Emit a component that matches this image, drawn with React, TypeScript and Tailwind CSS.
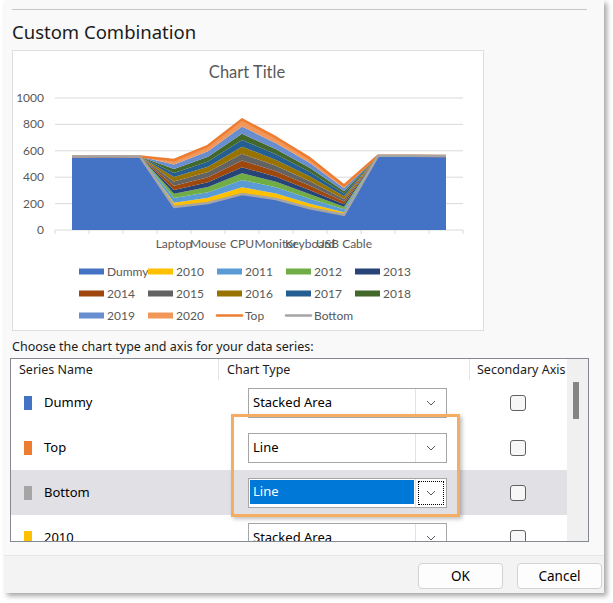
import React from "react";

// ── chart data ───────────────────────────────────────────────
const cx = (i: number) => 55 + 34 * (i + 0.5);
const yv = (v: number) => 230 - v * 0.132;

const dummy = [556, 558, 556, 175, 205, 272, 235, 165, 115, 562, 563, 560];
const thick = [0, 0, 0, 32, 39, 51, 42, 34, 20, 0, 0, 0];
const factors = [1.0, 1.1, 1.0, 0.9, 1.0, 1.0, 1.05, 1.0, 0.9, 1.1, 1.05];
const layerColors = [
  "#FFC000",
  "#5B9BD5",
  "#70AD47",
  "#264478",
  "#9E480E",
  "#636363",
  "#997300",
  "#255E91",
  "#43682B",
  "#698ED0",
  "#F1975A",
];

const stacks: number[][] = [dummy];
layerColors.forEach((_, k) => {
  const prev = stacks[stacks.length - 1];
  stacks.push(prev.map((p, i) => p + thick[i] * factors[k]));
});

const pts = (vals: number[]) => vals.map((v, i) => `${cx(i)},${yv(v)}`);

const areaPath = (upper: number[], lower: number[] | null) => {
  const up = pts(upper);
  const low = lower
    ? pts(lower).reverse()
    : [`${cx(11)},${yv(0)}`, `${cx(0)},${yv(0)}`];
  return `M${up.join(" L")} L${low.join(" L")} Z`;
};

const legend = [
  ["Dummy", "#4472C4", "box"],
  ["2010", "#FFC000", "box"],
  ["2011", "#5B9BD5", "box"],
  ["2012", "#70AD47", "box"],
  ["2013", "#264478", "box"],
  ["2014", "#9E480E", "box"],
  ["2015", "#636363", "box"],
  ["2016", "#997300", "box"],
  ["2017", "#255E91", "box"],
  ["2018", "#43682B", "box"],
  ["2019", "#698ED0", "box"],
  ["2020", "#F1975A", "box"],
  ["Top", "#ED7D31", "line"],
  ["Bottom", "#A5A5A5", "line"],
];

const xLabels: [string, number][] = [
  ["Laptop", 3],
  ["Mouse", 4],
  ["CPU", 5],
  ["Monitor", 6],
  ["Keyboard", 7],
  ["USB Cable", 8],
];

function Chart() {
  return (
    <svg width="470" height="279" viewBox="13 51 470 279">
      <g fontFamily="Lato, 'Liberation Sans', sans-serif" fill="#595959">
        <text x="247" y="77.5" fontSize="16.5" textAnchor="middle">
          Chart Title
        </text>
        {[0, 200, 400, 600, 800, 1000].map((v) => (
          <g key={v}>
            <line x1="55" x2="463" y1={yv(v)} y2={yv(v)} stroke="#d9d9d9" strokeWidth="1" />
            <text x="44" y={yv(v) + 4} fontSize="12" textAnchor="end">
              {v}
            </text>
          </g>
        ))}
        {Array.from({ length: 13 }).map((_, k) => (
          <line key={k} x1={55 + 34 * k} x2={55 + 34 * k} y1="230" y2="234" stroke="#d9d9d9" />
        ))}
        {xLabels.map(([t, i]) => (
          <text key={t} x={cx(i)} y="248" fontSize="12" textAnchor="middle">
            {t}
          </text>
        ))}
      </g>

      {/* stacked areas */}
      <path d={areaPath(dummy, null)} fill="#4472C4" />
      {layerColors.map((c, k) => (
        <path key={c} d={areaPath(stacks[k + 1], stacks[k])} fill={c} />
      ))}
      <polyline
        points={pts(stacks[stacks.length - 1]).join(" ")}
        fill="none"
        stroke="#ED7D31"
        strokeWidth="2.5"
        strokeLinejoin="round"
      />
      <polyline
        points={pts(dummy).join(" ")}
        fill="none"
        stroke="#A5A5A5"
        strokeWidth="2.5"
        strokeLinejoin="round"
      />

      {/* legend */}
      <g fontFamily="Lato, 'Liberation Sans', sans-serif" fill="#595959" fontSize="12">
        {legend.map(([name, color, kind], n) => {
          const x = 79 + 69 * (n % 5);
          const y = 271.5 + 22 * Math.floor(n / 5);
          return (
            <g key={name}>
              {kind === "box" ? (
                <rect x={x} y={y - 3} width="25" height="6" fill={color} />
              ) : (
                <line x1={x} x2={x + 25} y1={y} y2={y} stroke={color} strokeWidth="2.5" strokeLinecap="round" />
              )}
              <text x={x + 28} y={y + 4.5}>
                {name}
              </text>
            </g>
          );
        })}
      </g>
    </svg>
  );
}

function Chevron() {
  return (
    <svg width="10" height="6" viewBox="0 0 10 6">
      <path d="M1 1 L5 5 L9 1" fill="none" stroke="#5a5a5a" strokeWidth="1" />
    </svg>
  );
}

function Dropdown({ value, selected }: { value: string; selected?: boolean }) {
  return (
    <div className="flex w-[199px] h-[30px] border border-[#a6a6a6] bg-white">
      {selected ? (
        <div className="flex-1 p-px pb-[3px]">
          <div className="h-full bg-[#0078d7] text-white flex items-center pl-[3px] text-[13px]">
            {value}
          </div>
        </div>
      ) : (
        <div className="flex-1 flex items-center pl-[4px] text-[13px] text-black">{value}</div>
      )}
      <div className="w-[31px] border-l border-[#e3e3e3] flex items-center justify-center p-[2px]">
        <div
          className={`w-full h-full flex items-center justify-center ${
            selected ? "border border-dotted border-black" : ""
          }`}
        >
          <Chevron />
        </div>
      </div>
    </div>
  );
}

const rows = [
  { name: "Dummy", color: "#4472C4", type: "Stacked Area" },
  { name: "Top", color: "#ED7D31", type: "Line" },
  { name: "Bottom", color: "#A5A5A5", type: "Line", active: true },
  { name: "2010", color: "#FFC000", type: "Stacked Area" },
];

export default function App() {
  return (
    <div className="w-[613px] h-[603px] bg-white overflow-hidden pl-[4px] font-['Noto_Sans',sans-serif] text-black">
      <div className="w-[600px] h-[593px] bg-[#f9f9f9] shadow-[3px_3px_5px_rgba(0,0,0,0.35)] flex flex-col">
        <div className="pt-[9px] pl-[8px] pr-[17px]">
          <div className="h-px bg-[#c6c6c6]" />
        </div>

        <h1 className="mt-[10px] ml-[8px] h-[24px] leading-[24px] text-[18.5px] text-[#1b1b1b]">
          Custom Combination
        </h1>

        {/* chart preview */}
        <div className="mt-[6px] ml-[8px] w-[472px] h-[281px] border border-[#dedede] bg-white">
          <Chart />
        </div>

        <p className="mt-[8px] ml-[8px] h-[16px] leading-[16px] text-[12.5px] text-[#1b1b1b]">
          Choose the chart type and axis for your data series:
        </p>

        {/* series table */}
        <div className="relative mt-[3px] ml-[6px] w-[579px] h-[184px] border border-[#858a92] bg-white flex">
          <div className="w-[556px] overflow-hidden">
            <div className="flex h-[21px] items-center text-[12.5px] text-[#1b1b1b]">
              <div className="w-[208px] pl-[8px] pt-[2px] border-r border-[#e5e5e5] h-full flex items-center">
                Series Name
              </div>
              <div className="w-[251px] pl-[8px] pt-[2px] border-r border-[#e5e5e5] h-full flex items-center">
                Chart Type
              </div>
              <div className="flex-1 pl-[7px] pt-[2px] whitespace-nowrap overflow-hidden h-full flex items-center">
                Secondary Axis
              </div>
            </div>
            {rows.map((r) => (
              <div
                key={r.name}
                className={`flex h-[45px] items-center ${r.active ? "bg-[#e1e0e5]" : ""}`}
              >
                <div className="w-[208px] flex items-center pl-[13px] gap-[12px]">
                  <span className="w-[8px] h-[14px]" style={{ background: r.color }} />
                  <span className="text-[13px]">{r.name}</span>
                </div>
                <div className="w-[251px] pl-[29px]">
                  <Dropdown value={r.type} selected={r.active} />
                </div>
                <div className="flex-1 pl-[40px]">
                  <div className="w-[16px] h-[16px] rounded-[3px] border border-[#616161] bg-[#f7f7f7]" />
                </div>
              </div>
            ))}
          </div>
          <div className="flex-1 bg-[#f0f0f0] pt-[23px] pl-[6px]">
            <div className="w-[6px] h-[37px] bg-[#858585]" />
          </div>

          {/* highlight */}
          <div className="absolute left-[220px] top-[55px] w-[229px] h-[103px] border-[3px] border-[#f6ad61] shadow-[2px_2px_4px_rgba(0,0,0,0.25)]" />
        </div>

        <div className="flex-1" />

        <div className="h-[38px] border-t border-[#e6e6e6] bg-[#f3f3f3] flex items-start justify-end gap-[14px] pt-[7px] pr-[2px]">
          <button className="w-[85px] h-[26px] rounded-[4px] border border-[#d3d3d3] bg-[#fdfdfd] text-[13.5px]">
            OK
          </button>
          <button className="w-[85px] h-[26px] rounded-[4px] border border-[#d3d3d3] bg-[#fdfdfd] text-[13.5px]">
            Cancel
          </button>
        </div>
      </div>
    </div>
  );
}
